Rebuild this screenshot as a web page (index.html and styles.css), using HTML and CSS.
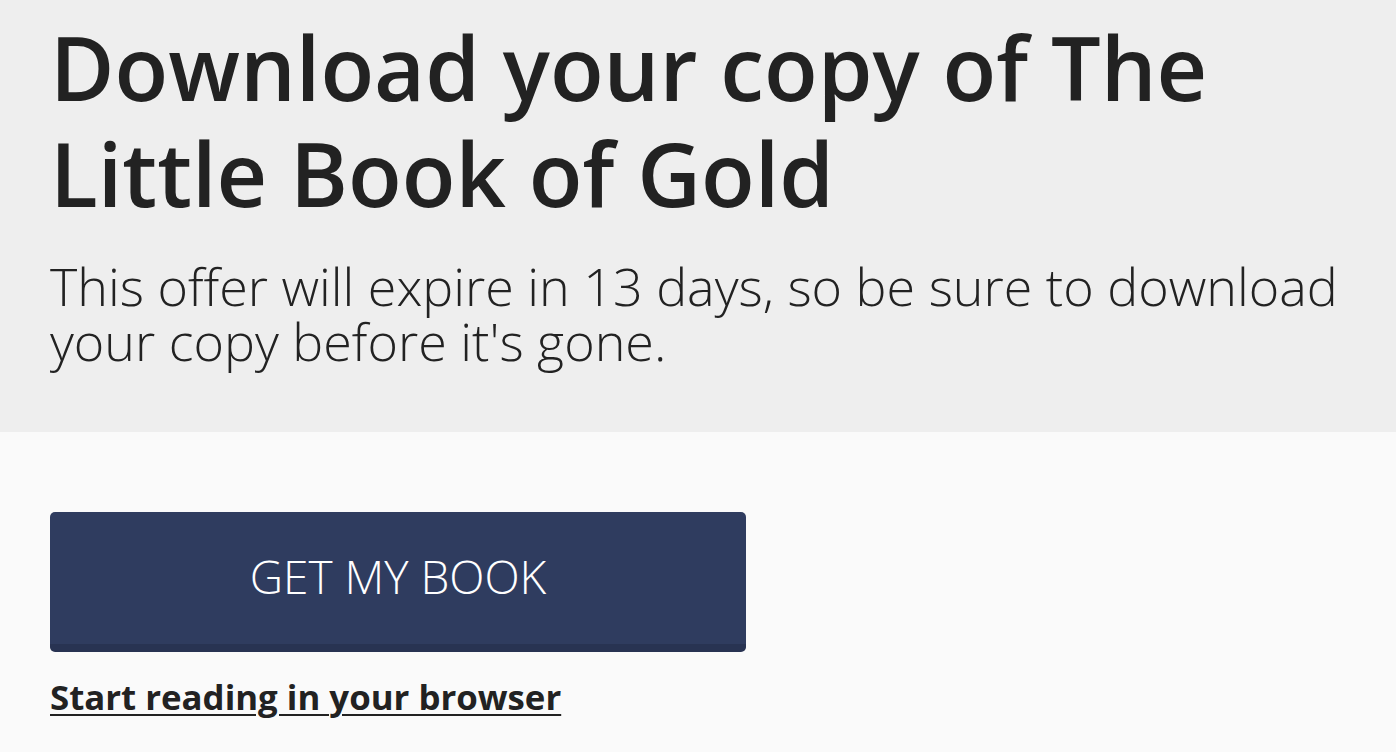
FILE: index.html
```html
<!DOCTYPE html>
<html lang="en">
<head>
<meta charset="utf-8">
<title>Download your copy</title>
<link rel="stylesheet" href="styles.css">
</head>
<body>
<header class="hero">
  <h1 class="hero-title">Download your copy of The Little Book of Gold</h1>
  <p class="hero-text">This offer will expire in 13 days, so be sure to download your copy before it's gone.</p>
</header>
<main class="actions">
  <a class="btn-primary" href="#">GET MY BOOK</a>
  <a class="read-link" href="#">Start reading in your browser</a>
</main>
</body>
</html>
```

FILE: styles.css
```css
html, body {
  margin: 0;
  padding: 0;
}
body {
  background: #fafafa;
  font-family: "Open Sans", "Liberation Sans", sans-serif;
  color: #222222;
}
.hero {
  background: #eeeeee;
  padding: 15px 50px 64px 50px;
}
.hero-title {
  margin: 0;
  font-size: 88px;
  line-height: 105.6px;
  font-weight: 600;
}
.hero-text {
  margin: 32px 0 0 0;
  font-size: 52px;
  line-height: 55px;
  font-weight: 300;
}
.actions {
  display: flex;
  flex-direction: column;
  align-items: flex-start;
  padding: 80px 50px 0 50px;
}
.btn-primary {
  display: flex;
  align-items: center;
  justify-content: center;
  box-sizing: border-box;
  width: 696px;
  height: 140px;
  background: #2f3c5f;
  border-bottom: 8px solid #283352;
  border-radius: 5px;
  color: #ffffff;
  text-decoration: none;
  font-size: 46px;
  font-weight: 300;
  padding-bottom: 4px;
}
.read-link {
  margin-top: 24px;
  font-size: 34.8px;
  line-height: 42px;
  font-weight: 700;
  color: #222222;
  text-decoration: underline;
  text-underline-offset: 4px;
  text-decoration-thickness: 2px;
}
```
